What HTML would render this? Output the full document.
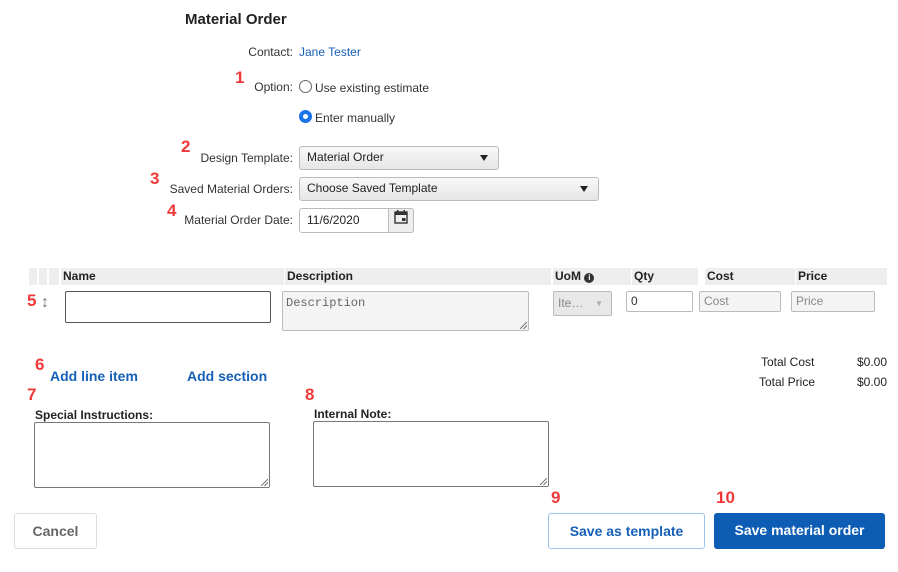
<!DOCTYPE html>
<html><head><meta charset="utf-8"><style>
*{box-sizing:border-box;margin:0;padding:0}
body{width:898px;height:572px;background:#fff;font-family:"Liberation Sans",Arial,sans-serif;color:#333;position:relative;overflow:hidden;font-size:12px}
.a{position:absolute;white-space:nowrap}
.n{position:absolute;color:#f03a3a;font-weight:bold;font-size:17px}
.lbl{position:absolute;text-align:right;font-size:12px;color:#333}
.sel{position:absolute;border:1px solid #bbb;border-radius:3px;background:linear-gradient(#f8f8f8,#e6e6e6);font-size:12px;padding-left:7px;line-height:21px;color:#222}
.sel:after{content:"";position:absolute;right:10px;top:8px;border-left:4px solid transparent;border-right:4px solid transparent;border-top:6px solid #222}
.th{position:absolute;top:268px;height:17px;background:#eee;font-weight:bold;font-size:12px;line-height:17px;padding-left:2px;color:#222}
.inp{position:absolute;border:1px solid #bbb;border-radius:2px;background:#f4f4f4;font-size:12px;color:#888;padding-left:4px;line-height:19px}
.ta{position:absolute;border:1px solid #777;border-radius:2px;background:#fff}
.ta:after{content:"";position:absolute;right:1px;bottom:1px;width:7px;height:7px;background:linear-gradient(135deg,transparent 45%,#777 45%,#777 55%,transparent 55%,transparent 70%,#777 70%,#777 80%,transparent 80%)}
.btn{position:absolute;border-radius:3px;font-weight:bold;font-size:14px;text-align:center;line-height:34px;top:513px;height:36px}
</style></head><body>
<div class="a" style="left:185px;top:11px;font-size:15px;font-weight:bold;color:#222">Material Order</div>
<div class="lbl" style="right:605px;top:45px">Contact:</div>
<div class="a" style="left:299px;top:45px;color:#1760b8">Jane Tester</div>
<div class="n" style="left:235px;top:68px">1</div>
<div class="lbl" style="right:605px;top:80px">Option:</div>
<div class="a" style="left:299px;top:80px;width:13px;height:13px;border:1px solid #666;border-radius:50%"></div>
<div class="a" style="left:315px;top:81px">Use existing estimate</div>
<div class="a" style="left:299px;top:110px;width:13px;height:13px;border:4px solid #1a73e8;border-radius:50%;background:#fff"></div>
<div class="a" style="left:315px;top:111px">Enter manually</div>
<div class="n" style="left:181px;top:137px">2</div>
<div class="lbl" style="right:605px;top:151px">Design Template:</div>
<div class="sel" style="left:299px;top:146px;width:200px;height:24px">Material Order</div>
<div class="n" style="left:150px;top:169px">3</div>
<div class="lbl" style="right:605px;top:182px">Saved Material Orders:</div>
<div class="sel" style="left:299px;top:177px;width:300px;height:24px">Choose Saved Template</div>
<div class="n" style="left:167px;top:201px">4</div>
<div class="lbl" style="right:605px;top:213px">Material Order Date:</div>
<div class="a" style="left:299px;top:208px;width:115px;height:25px;border:1px solid #bbb;border-radius:3px;background:#fff;padding-left:7px;line-height:23px;font-size:12px;color:#222">11/6/2020</div>
<div class="a" style="left:388px;top:208px;width:26px;height:25px;border:1px solid #bbb;border-radius:0 3px 3px 0;background:#eee"></div>
<svg class="a" style="left:393px;top:209px" width="16" height="16" viewBox="0 0 16 16"><rect x="2" y="3" width="12" height="11" fill="none" stroke="#333" stroke-width="1.4"/><rect x="2" y="3" width="12" height="3" fill="#333"/><rect x="4" y="1" width="1.5" height="3" fill="#333"/><rect x="10.5" y="1" width="1.5" height="3" fill="#333"/><rect x="9" y="9" width="3.5" height="3" fill="#333"/></svg>

<div class="th" style="left:29px;width:8px"></div>
<div class="th" style="left:39px;width:8px"></div>
<div class="th" style="left:49px;width:10px"></div>
<div class="th" style="left:61px;width:223px">Name</div>
<div class="th" style="left:285px;width:266px">Description</div>
<div class="th" style="left:553px;width:78px">UoM <span style="display:inline-block;width:10px;height:10px;border-radius:50%;background:#333;color:#fff;font-size:8px;line-height:10px;text-align:center;vertical-align:0">i</span></div>
<div class="th" style="left:632px;width:66px">Qty</div>
<div class="th" style="left:705px;width:90px">Cost</div>
<div class="th" style="left:796px;width:91px">Price</div>
<div class="n" style="left:27px;top:291px">5</div>
<div class="a" style="left:41px;top:294px;font-size:16px;color:#777">↕</div>
<div class="a" style="left:65px;top:291px;width:206px;height:32px;border:1px solid #555;border-radius:2px"></div>
<div class="ta" style="left:282px;top:291px;width:247px;height:40px;border-color:#bbb;background:#f4f4f4;font-family:'Liberation Mono',monospace;font-size:12px;color:#666;padding:4px 3px">Description</div>
<div class="inp" style="left:553px;top:291px;width:59px;height:25px;line-height:23px;background:#e8e8e8;color:#888">Ite…<span style="position:absolute;right:8px;font-size:8px;color:#aaa">▼</span></div>
<div class="inp" style="left:626px;top:291px;width:67px;height:21px;background:#fff;color:#333">0</div>
<div class="inp" style="left:699px;top:291px;width:82px;height:21px">Cost</div>
<div class="inp" style="left:791px;top:291px;width:84px;height:21px">Price</div>

<div class="n" style="left:35px;top:355px">6</div>
<div class="a" style="left:50px;top:368px;font-weight:bold;font-size:14px;color:#1760b8">Add line item</div>
<div class="a" style="left:187px;top:368px;font-weight:bold;font-size:14px;color:#1760b8">Add section</div>
<div class="a" style="left:761px;top:355px;color:#222">Total Cost</div>
<div class="a" style="left:857px;top:355px;color:#222">$0.00</div>
<div class="a" style="left:759px;top:375px;color:#222">Total Price</div>
<div class="a" style="left:857px;top:375px;color:#222">$0.00</div>

<div class="n" style="left:27px;top:385px">7</div>
<div class="a" style="left:35px;top:408px;font-weight:bold;color:#222">Special Instructions:</div>
<div class="ta" style="left:34px;top:422px;width:236px;height:66px"></div>
<div class="n" style="left:305px;top:385px">8</div>
<div class="a" style="left:314px;top:407px;font-weight:bold;color:#222">Internal Note:</div>
<div class="ta" style="left:313px;top:421px;width:236px;height:66px"></div>

<div class="n" style="left:551px;top:488px">9</div>
<div class="n" style="left:716px;top:488px">10</div>
<div class="btn" style="left:14px;width:83px;border:1px solid #ddd;color:#666;background:#fff">Cancel</div>
<div class="btn" style="left:548px;width:157px;border:1px solid #9cc3e8;color:#1760b8;background:#fff">Save as template</div>
<div class="btn" style="left:714px;width:171px;background:#0c5db3;color:#fff">Save material order</div>
</body></html>
